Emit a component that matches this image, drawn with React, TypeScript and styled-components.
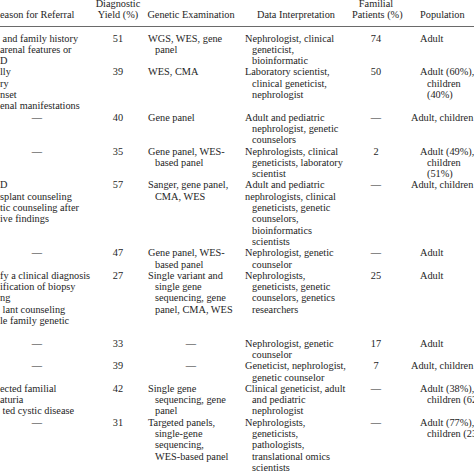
import React from "react"
import styled, { createGlobalStyle } from "styled-components"

const GlobalStyle = createGlobalStyle`
  html, body {
    margin: 0;
    padding: 0;
    background: #ffffff;
  }
  body {
    width: 474px;
    height: 474px;
    overflow: hidden;
  }
`

const COLUMNS = "94px 48px 98px 112px 48px 1fr"

const Table = styled.div`
  margin-top: -2px;
  width: 474px;
  font-family: "Liberation Serif", "Times New Roman", serif;
  font-size: 10.3px;
  line-height: 11.3px;
  color: #1e1e1e;
`

const HeaderRow = styled.div`
  display: grid;
  grid-template-columns: ${COLUMNS};
  align-items: end;
  padding-bottom: 5px;
  border-bottom: 1px solid #6a6a6a;
`

const HeadCell = styled.div<{ $align?: "left" | "center"; $shift?: number }>`
  text-align: ${p => p.$align || "center"};
  padding-right: ${p => (p.$shift && p.$shift > 0 ? p.$shift : 0)}px;
  padding-left: ${p => (p.$shift && p.$shift < 0 ? -p.$shift : 0)}px;
  white-space: nowrap;
`

const Body = styled.div`
  padding-top: 6px;
`

const Row = styled.div<{ $lines?: number }>`
  display: grid;
  grid-template-columns: ${COLUMNS};
  align-items: start;
  min-height: ${p => (p.$lines ? p.$lines * 11.3 : 0)}px;
`

const Cell = styled.div<{ $pad?: number }>`
  padding-left: ${p => p.$pad || 0}px;
  white-space: nowrap;
`

const Centered = styled.div<{ $shift?: number }>`
  text-align: center;
  padding-right: ${p => p.$shift || 0}px;
`

const Line = styled.div<{ $hang?: boolean }>`
  padding-left: ${p => (p.$hang ? 7 : 0)}px;
`

type Lines = string[] | string

interface RowData {
  reason: Lines
  yieldPct: string
  exam: Lines
  interp: string[]
  flat?: number
  familial: string
  population: string[]
  lines?: number
}

const rows: RowData[] = [
  {
    reason: ["\u00a0and family history", "arenal features or", "D"],
    yieldPct: "51",
    exam: ["WGS, WES, gene", "panel"],
    interp: ["Nephrologist, clinical", "geneticist,", "bioinformatic"],
    familial: "74",
    population: ["Adult"],
  },
  {
    reason: ["lly", "ry", "nset", "enal manifestations"],
    yieldPct: "39",
    exam: ["WES, CMA"],
    interp: ["Laboratory scientist,", "clinical geneticist,", "nephrologist"],
    familial: "50",
    population: ["Adult (60%),", "children", "(40%)"],
  },
  {
    reason: "—",
    yieldPct: "40",
    exam: ["Gene panel"],
    interp: ["Adult and pediatric", "nephrologist, genetic", "counselors"],
    familial: "—",
    population: ["Adult, children"],
  },
  {
    reason: "—",
    yieldPct: "35",
    exam: ["Gene panel, WES-", "based panel"],
    interp: ["Nephrologists, clinical", "geneticists, laboratory", "scientist"],
    familial: "2",
    population: ["Adult (49%),", "children", "(51%)"],
  },
  {
    reason: ["D", "splant counseling", "tic counseling after", "ive findings"],
    yieldPct: "57",
    exam: ["Sanger, gene panel,", "CMA, WES"],
    interp: [
      "Adult and pediatric",
      "nephrologists, clinical",
      "geneticists, genetic",
      "counselors,",
      "bioinformatics",
      "scientists",
    ],
    flat: 2,
    familial: "—",
    population: ["Adult, children"],
  },
  {
    reason: "—",
    yieldPct: "47",
    exam: ["Gene panel, WES-", "based panel"],
    interp: ["Nephrologist, genetic", "counselor"],
    familial: "—",
    population: ["Adult"],
  },
  {
    reason: [
      "fy a clinical diagnosis",
      "ification of biopsy",
      "ng",
      "\u00a0lant counseling",
      "le family genetic",
    ],
    yieldPct: "27",
    exam: ["Single variant and", "single gene", "sequencing, gene", "panel, CMA, WES"],
    interp: ["Nephrologists,", "geneticists, genetic", "counselors, genetics", "researchers"],
    familial: "25",
    population: ["Adult"],
    lines: 6,
  },
  {
    reason: "—",
    yieldPct: "33",
    exam: "—",
    interp: ["Nephrologist, genetic", "counselor"],
    familial: "17",
    population: ["Adult"],
  },
  {
    reason: "—",
    yieldPct: "39",
    exam: "—",
    interp: ["Geneticist, nephrologist,", "genetic counselor"],
    familial: "7",
    population: ["Adult, children"],
  },
  {
    reason: ["ected familial", "aturia", "\u00a0ted cystic disease"],
    yieldPct: "42",
    exam: ["Single gene", "sequencing, gene", "panel"],
    interp: ["Clinical geneticist, adult", "and pediatric", "nephrologist"],
    familial: "—",
    population: ["Adult (38%),", "children (62%)"],
  },
  {
    reason: "—",
    yieldPct: "31",
    exam: ["Targeted panels,", "single-gene", "sequencing,", "WES-based panel"],
    interp: [
      "Nephrologists,",
      "geneticists,",
      "pathologists,",
      "translational omics",
      "scientists",
    ],
    familial: "—",
    population: ["Adult (77%),", "children (23%)"],
  },
]

function HangingLines({ lines, flat = 1, hang = true }: { lines: string[]; flat?: number; hang?: boolean }) {
  return (
    <>
      {lines.map((text, i) => (
        <Line key={i} $hang={hang && i >= flat}>
          {text}
        </Line>
      ))}
    </>
  )
}

function TextCell({ value, pad, shift, hang }: { value: Lines; pad?: number; shift?: number; hang?: boolean }) {
  if (typeof value === "string") {
    return (
      <Cell>
        <Centered $shift={shift}>{value}</Centered>
      </Cell>
    )
  }
  return (
    <Cell $pad={pad}>
      <HangingLines lines={value} hang={hang} />
    </Cell>
  )
}

// single long entries ("Adult, children") sit further left so they fit the column
function populationPad(lines: string[]) {
  return lines.length === 1 && lines[0].length > 10 ? 11 : 20
}

export default function App() {
  return (
    <>
      <GlobalStyle />
      <Table>
        <HeaderRow>
          <HeadCell $shift={20}>eason for Referral</HeadCell>
          <HeadCell>
            Diagnostic
            <br />
            Yield (%)
          </HeadCell>
          <HeadCell>Genetic Examination</HeadCell>
          <HeadCell>Data Interpretation</HeadCell>
          <HeadCell>
            Familial
            <br />
            Patients (%)
          </HeadCell>
          <HeadCell $align="left" $shift={-20}>
            Population
          </HeadCell>
        </HeaderRow>
        <Body>
          {rows.map((row, i) => (
            <Row key={i} $lines={row.lines}>
              <TextCell value={row.reason} shift={20} hang={false} />
              <Cell>
                <Centered>{row.yieldPct}</Centered>
              </Cell>
              <TextCell value={row.exam} pad={6} />
              <Cell $pad={5}>
                <HangingLines lines={row.interp} flat={row.flat} />
              </Cell>
              <Cell>
                <Centered>{row.familial}</Centered>
              </Cell>
              <TextCell value={row.population} pad={populationPad(row.population)} />
            </Row>
          ))}
        </Body>
      </Table>
    </>
  )
}
